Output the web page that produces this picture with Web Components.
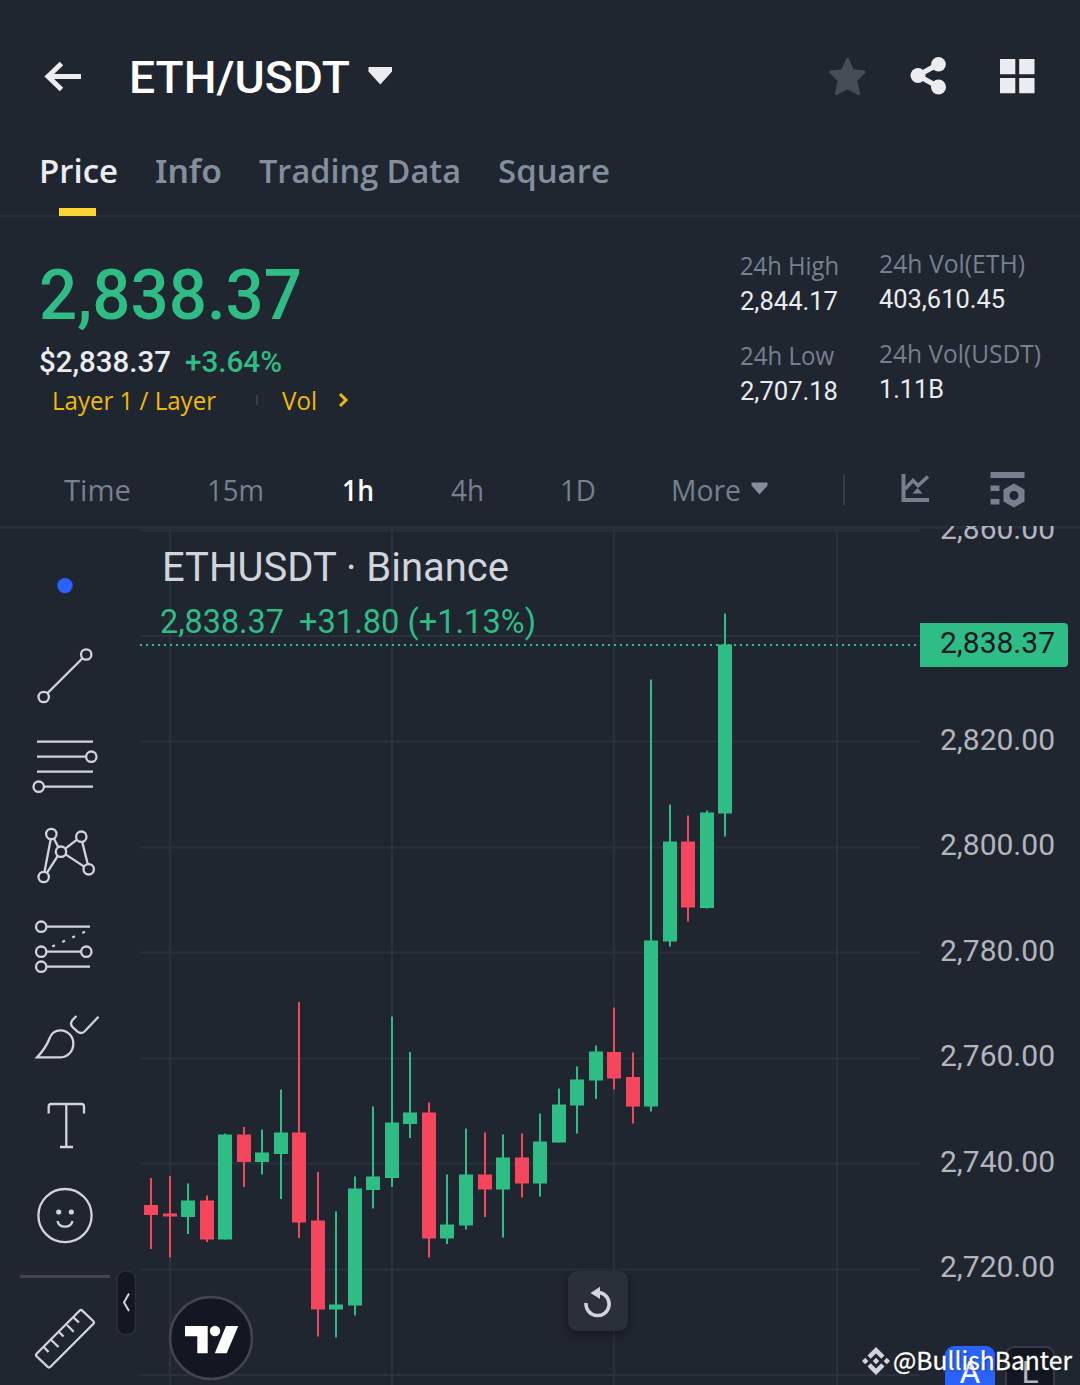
<!DOCTYPE html>
<html lang="en">
<head>
<meta charset="utf-8">
<title>ETH/USDT</title>
<style>
  html, body {
    margin: 0;
    background: #202630;
  }
  body {
    width: 1080px;
    height: 1385px;
    overflow: hidden;
    font-family: "Open Sans", "Noto Sans", sans-serif;
    color: #eaecef;
  }
</style>
</head>
<body>
<market-app></market-app>

<script>
// Single line of text, scaled horizontally to the width given in "w"
class FitText extends HTMLElement {
  connectedCallback() {
    this.attachShadow({ mode: 'open' });
    this.shadowRoot.innerHTML = `
      <style>
        :host {
          display: block;
          flex: none;
          white-space: nowrap;
        }
        span {
          display: inline-block;
          vertical-align: top;
          transform-origin: 0 50%;
        }
      </style>
      <span><slot></slot></span>
    `;
    const span = this.shadowRoot.querySelector('span');
    const width = Number(this.getAttribute('w'));
    const natural = span.getBoundingClientRect().width;
    this.style.width = width + 'px';
    if (natural) span.style.transform = `scaleX(${width / natural})`;
  }
}

class MarketHeader extends HTMLElement {
  connectedCallback() {
    this.attachShadow({ mode: 'open' });
    this.shadowRoot.innerHTML = `
      <style>
        :host {
          display: flex;
          align-items: center;
          height: 154px;
          padding: 0 45px 0 43px;
        }
        svg { display: block; flex: none; }
        .title {
          margin: 2px 18px 0 46px;
          font: 500 44px/60px Roboto, sans-serif;
          color: #fff;
        }
        .actions {
          display: flex;
          align-items: center;
          gap: 44px;
          margin-left: auto;
        }
      </style>
      <svg width="40" height="32" viewBox="0 0 40 32" fill="none" stroke="#eaecef" stroke-width="5">
        <path d="M18.5 2.5 5 15.500 18.500 28.500M5 15.500H38"/>
      </svg>
      <fit-text class="title" w="221">ETH/USDT</fit-text>
      <svg width="24" height="22" viewBox="0 0 24 22" fill="#eaecef"><path d="M.5 1H24V5.500L12.300 18.500.5 5.500Z"/></svg>
      <div class="actions">
        <svg width="38" height="40" viewBox="0 0 38 40" fill="#474d57" stroke="#474d57" stroke-width="3" stroke-linejoin="round">
          <path d="M19.500 2.500 24.500 13.700 36 15 27.700 23.300 30.500 36.500 19.500 30.700 8.500 36.500 11.300 23.300 2.500 15 14.500 13.700Z"/>
        </svg>
        <svg width="37" height="40" viewBox="0 0 37 40" fill="#eaecef">
          <path d="M8 18.500 28.500 7M8 18.500 28.500 30" stroke="#eaecef" stroke-width="5"/>
          <circle cx="8" cy="18.500" r="7.500"/><circle cx="28.500" cy="7.300" r="7.300"/><circle cx="28.500" cy="30" r="7.500"/>
        </svg>
        <svg width="35" height="36" viewBox="0 0 35 36" fill="#eaecef" style="margin-left:9px">
          <path d="M0 0h15.300v15.300H0zM19.200 0h15.300v15.300H19.200zM0 19h15.300v15.300H0zM19.200 19h15.300v15.300H19.200z"/>
        </svg>
      </div>
    `;
  }
}

class MarketTabs extends HTMLElement {
  connectedCallback() {
    this.attachShadow({ mode: 'open' });
    this.shadowRoot.innerHTML = `
      <style>
        :host {
          display: flex;
          gap: 37px;
          height: 61px;
          padding-left: 39px;
          border-bottom: 2px solid #2a3038;
          font: 600 33px/32px "Open Sans", sans-serif;
          color: #848e9c;
        }
        .tab {
          display: flex;
          flex-direction: column;
          align-items: center;
          justify-content: space-between;
          padding-top: 1px;
        }
        .info { font-family: "Noto Sans", sans-serif; }
        .active { color: #eaecef; }
        .active::after {
          content: "";
          width: 37px;
          height: 8px;
          margin: 0 2px -1px 0;
          background: #fcd535;
        }
      </style>
      <div class="tab active"><fit-text w="79">Price</fit-text></div>
      <div class="tab info"><fit-text w="67">Info</fit-text></div>
      <div class="tab"><fit-text w="202">Trading Data</fit-text></div>
      <div class="tab"><fit-text w="112">Square</fit-text></div>
    `;
  }
}

class StatItem extends HTMLElement {
  connectedCallback() {
    this.attachShadow({ mode: 'open' });
    this.shadowRoot.innerHTML = `
      <style>
        :host {
          display: flex;
          flex-direction: column;
          height: 90px;
        }
        .label {
          font: 400 26px/36px "Open Sans", sans-serif;
          color: #76808f;
        }
        .value {
          font: 400 26px/36px Roboto, sans-serif;
          color: #eaecef;
        }
      </style>
      <fit-text class="label" w="${this.getAttribute('label-w')}">${this.getAttribute('label')}</fit-text>
      <fit-text class="value" w="${this.getAttribute('value-w')}">${this.getAttribute('value')}</fit-text>
    `;
  }
}

class PriceSummary extends HTMLElement {
  connectedCallback() {
    this.attachShadow({ mode: 'open' });
    this.shadowRoot.innerHTML = `
      <style>
        :host {
          display: flex;
          height: 235px;
        }
        .left {
          width: 740px;
          padding: 38px 0 0 39px;
          box-sizing: border-box;
        }
        .last {
          font: 500 70px/80px Roboto, sans-serif;
          color: #2ebd85;
        }
        .fiat {
          display: flex;
          gap: 14px;
          margin-top: 12px;
          font: 500 29px/30px Roboto, sans-serif;
        }
        .change { color: #2ebd85; }
        .tags {
          display: flex;
          align-items: center;
          margin-top: 6px;
          padding-left: 13px;
          font: 400 25px/34px "Open Sans", sans-serif;
          color: #f0b90b;
        }
        .sep {
          width: 2px;
          height: 10px;
          margin: 0 24px 0 40px;
          background: #363c46;
        }
        .tags svg { margin-left: 21px; }
        .stats {
          display: flex;
          padding-top: 30px;
        }
        .col { width: 139px; }
        .col + .col { margin-top: -2px; }
      </style>
      <div class="left">
        <fit-text class="last" w="263">2,838.37</fit-text>
        <div class="fiat">
          <fit-text w="132">$2,838.37</fit-text>
          <fit-text class="change" w="97">+3.64%</fit-text>
        </div>
        <div class="tags">
          <fit-text w="164">Layer 1 / Layer</fit-text>
          <i class="sep"></i>
          <fit-text w="35">Vol</fit-text>
          <svg width="12" height="16" viewBox="0 0 12 16" fill="none" stroke="#f0b90b" stroke-width="3"><path d="M2 2 8 8 2 14"/></svg>
        </div>
      </div>
      <div class="stats">
        <div class="col">
          <stat-item label="24h High" label-w="99" value="2,844.17" value-w="98"></stat-item>
          <stat-item label="24h Low" label-w="94" value="2,707.18" value-w="98"></stat-item>
        </div>
        <div class="col">
          <stat-item label="24h Vol(ETH)" label-w="146" value="403,610.45" value-w="126"></stat-item>
          <stat-item label="24h Vol(USDT)" label-w="162" value="1.11B" value-w="65"></stat-item>
        </div>
      </div>
    `;
  }
}

class IntervalBar extends HTMLElement {
  connectedCallback() {
    this.attachShadow({ mode: 'open' });
    this.shadowRoot.innerHTML = `
      <style>
        :host {
          display: flex;
          align-items: center;
          box-sizing: border-box;
          height: 74px;
          padding: 2px 0 0 64px;
          font: 400 28.5px/40px "Open Sans", sans-serif;
          color: #76808f;
        }
        .items {
          display: flex;
          align-items: center;
          gap: 76px;
        }
        .active { color: #fff; font-weight: 600; }
        .caret { margin: -4px 75px 0 10px; }
        .sep {
          width: 2px;
          height: 30px;
          background: #363c46;
        }
        svg { display: block; }
      </style>
      <div class="items">
        <fit-text w="67">Time</fit-text>
        <fit-text w="57" style="margin-right:2px">15m</fit-text>
        <fit-text class="active" w="32" style="margin-right:1px">1h</fit-text>
        <fit-text w="33">4h</fit-text>
        <fit-text w="36">1D</fit-text>
        <fit-text w="70" style="margin-left:-1px">More</fit-text>
      </div>
      <svg class="caret" width="17" height="13" viewBox="0 0 17 13" fill="#848e9c"><path d="M.5.5H16.500V3.500L8.500 12.500.5 3.500Z"/></svg>
      <i class="sep"></i>
      <svg width="30" height="30" viewBox="0 0 30 30" style="margin:0 0 2px 56px" fill="none" stroke="#76808f" stroke-width="4">
        <path d="M2.500 0V28M1 26H28"/>
        <path d="M4 15 12 6.500 17 11.500 27 2.500" stroke-width="3.500"/>
        <path d="M11.500 19.500 16.500 14 21.500 19.500Z" fill="#76808f" stroke="none"/>
      </svg>
      <svg width="36" height="38" viewBox="0 0 36 38" style="margin-left:59px" fill="#76808f">
        <path d="M.5 1H34.500V7H.5zM.5 14.500H9.500V20H.5zM.5 28H9.500V33.500H.5z"/>
        <path fill-rule="evenodd" d="M24 12.500 34.500 18.500V30.500L24 36.500 13.500 30.500V18.500ZM24 20a4.500 4.500 0 1 0 0 9a4.500 4.500 0 1 0 0-9Z"/>
      </svg>
    `;
  }
}

class DrawingToolbar extends HTMLElement {
  connectedCallback() {
    this.attachShadow({ mode: 'open' });
    this.shadowRoot.innerHTML = `
      <style>
        :host {
          display: flex;
          flex-direction: column;
          flex: none;
          width: 140px;
          padding-top: 14px;
        }
        svg {
          display: block;
          flex: none;
          width: 140px;
          height: 90px;
          fill: none;
          stroke: #d1d4dc;
          stroke-width: 2.3;
        }
        hr {
          flex: none;
          width: 90px;
          height: 3px;
          margin: 15px 0 15px 20px;
          border: 0;
          background: #434651;
        }
      </style>
      <svg viewBox="0 0 140 90"><circle cx="65" cy="45.600" r="7.700" fill="#2962ff" stroke="none"/></svg>
      <svg viewBox="0 0 140 90">
        <circle cx="86.200" cy="24.500" r="5.200"/><circle cx="43.700" cy="67" r="5.200"/>
        <path d="M47.400 63.300 82.500 28.200"/>
      </svg>
      <svg viewBox="0 0 140 90">
        <path d="M37 21.700H93M37 36.700H86M37 51.700H93M44 66.700H93"/>
        <circle cx="91.300" cy="36.700" r="5.200"/><circle cx="38.700" cy="66.700" r="5.200"/>
      </svg>
      <svg viewBox="0 0 140 90">
        <path d="M53.900 28.500 58.300 37.200M50.700 29.200 44.500 61.800M57.800 45.900 46.900 62.900M65.300 38.700 77 29.700M65.500 44.400 84.200 56.600M82.200 31.900 87.800 54.200"/>
        <circle cx="51.300" cy="24" r="5.200"/><circle cx="81.300" cy="26.700" r="5.200"/><circle cx="61" cy="41.700" r="5.200"/>
        <circle cx="43.700" cy="67" r="5.200"/><circle cx="88.700" cy="59.300" r="5.200"/>
      </svg>
      <svg viewBox="0 0 140 90">
        <circle cx="41.200" cy="26.700" r="5.200"/><circle cx="41.200" cy="51.700" r="5.200"/><circle cx="41.200" cy="66.700" r="5.200"/><circle cx="86.300" cy="51.700" r="5.200"/>
        <path d="M46.500 26.700H90M46.500 51.700H81M46.500 66.700H90"/>
        <path d="M52.200 46.500 86 31.300" stroke-dasharray="3 8"/>
      </svg>
      <svg viewBox="0 0 140 90">
        <path d="M37 67.400C44 60 47 55 49.500 48.500C51.500 43 55.500 40.400 60.500 40.400A13 13 0 0 1 73.300 53.500C73.300 61.500 67.500 67.400 59.500 67.400Z"/>
        <path d="M76.500 26 72.500 30Q69.500 33.500 72.500 37L77.500 41.700Q81 44.500 84.500 41.500L98.500 26.800"/>
      </svg>
      <svg viewBox="0 0 140 90"><path d="M48.700 33.500V26.500Q48.700 24 51.200 24H81.500Q84 24 84 26.500V33.500M66.300 24V67M60 67H73"/></svg>
      <svg viewBox="0 0 140 90">
        <circle cx="65" cy="45.600" r="26.600"/>
        <circle cx="58.700" cy="42" r="2.600" fill="#d1d4dc" stroke="none"/><circle cx="71.300" cy="42" r="2.600" fill="#d1d4dc" stroke="none"/>
        <path d="M57.500 51C59 58.500 71 58.500 72.500 51"/>
      </svg>
      <hr>
      <svg viewBox="0 0 140 90" stroke-linejoin="round">
        <path d="M36.800 60.500 79.500 17.800Q81 16.300 82.500 17.800L93.200 28Q94.700 29.500 93.200 31L50.500 73.700Q49 75.200 47.500 73.700L36.800 63.500Q35.300 62 36.800 60.500Z"/>
        <path d="M44 54.300 48.500 59M51.300 47 58.500 54M59.300 39.300 63.500 43.500M67 32 73.700 38.700M73.700 24.700 79 29.500"/>
      </svg>
    `;
  }
}

const GREEN = '#2ebd85';
const RED = '#f6465d';

// x centre, direction, high, body top, body bottom, low (plot pixels)
const CANDLES = [
  [151, 'd', 1178, 1205, 1215, 1249],
  [170, 'd', 1176, 1213.5, 1216.5, 1257.5],
  [188, 'u', 1183.5, 1200.5, 1217, 1234],
  [207, 'd', 1195.5, 1200.5, 1239.5, 1242],
  [225, 'u', 1133.5, 1134.5, 1239.5, 1239.5],
  [244, 'd', 1127, 1134.5, 1162, 1187],
  [262, 'u', 1129.5, 1152.5, 1162, 1174.5],
  [281, 'u', 1089.5, 1132.5, 1154, 1199],
  [299, 'd', 1002, 1132.5, 1222.5, 1238],
  [318, 'd', 1172, 1220.5, 1309.5, 1336.5],
  [336, 'u', 1211.5, 1304.5, 1309.5, 1337.5],
  [355, 'u', 1176.5, 1188.5, 1305.5, 1315.5],
  [373, 'u', 1106.5, 1176.5, 1190, 1208.5],
  [392, 'u', 1016.5, 1122.5, 1178, 1187],
  [410, 'u', 1052, 1112.5, 1124, 1138],
  [429, 'd', 1102.5, 1112.5, 1238.5, 1257.5],
  [447, 'u', 1174.5, 1224.5, 1238.5, 1244],
  [466, 'u', 1128.5, 1174.5, 1225.5, 1229.5],
  [485, 'd', 1132.5, 1174.5, 1189.5, 1217],
  [503, 'u', 1134.5, 1157.5, 1189.5, 1237.5],
  [522, 'd', 1133.5, 1157.5, 1183.5, 1197.5],
  [540, 'u', 1113.5, 1141.5, 1183.5, 1196.5],
  [559, 'u', 1088.5, 1104.5, 1142.5, 1142.5],
  [577, 'u', 1066.5, 1079.5, 1105.5, 1133.5],
  [596, 'u', 1045.5, 1051.5, 1080.5, 1099],
  [614, 'd', 1007.5, 1052, 1078.5, 1089.5],
  [633, 'd', 1052.5, 1077, 1106.5, 1123.5],
  [651, 'u', 679.5, 940.5, 1106.5, 1111.5],
  [670, 'u', 804.5, 841.5, 941.5, 946.5],
  [688, 'd', 815.5, 841.5, 907.5, 921.5],
  [707, 'u', 810.5, 812.5, 908, 908.5],
  [725, 'u', 613.5, 644.5, 813.5, 836.5]
];

class CandlePlot extends HTMLElement {
  connectedCallback() {
    const rows = [530.5, 636, 741.5, 847.5, 952.5, 1058.5, 1163.5, 1269.5, 1375];
    const cols = [170, 392, 614, 837];
    const grid = rows.map(y => `M140 ${y}H920`).join('') + cols.map(x => `M${x} 526V1385`).join('');
    const candles = CANDLES.map(([x, dir, high, top, bottom, low]) => `
      <g fill="${dir === 'u' ? GREEN : RED}">
        <rect x="${x - 1}" y="${high}" width="2" height="${low - high}"/>
        <rect x="${x - 7}" y="${top}" width="14" height="${bottom - top}"/>
      </g>`).join('');
    this.attachShadow({ mode: 'open' });
    this.shadowRoot.innerHTML = `
      <style>
        :host {
          display: block;
          position: relative;
          flex: none;
          width: 780px;
          height: 859px;
        }
        svg { display: block; }
        .legend {
          position: absolute;
          left: 20px;
          top: 17px;
          font-family: Roboto, sans-serif;
        }
        .symbol {
          margin-left: 2px;
          font-size: 40px;
          line-height: 50px;
          color: #d1d4dc;
        }
        .quote {
          display: flex;
          gap: 15px;
          margin-top: 9px;
          font-size: 33px;
          line-height: 40px;
          color: #2ebd85;
        }
      </style>
      <svg width="780" height="859" viewBox="140 526 780 859">
        <path d="${grid}" stroke="#2b313b" stroke-width="2" fill="none"/>
        <path d="M140 645H920" stroke="${GREEN}" stroke-width="2" stroke-dasharray="2 4"/>
        ${candles}
      </svg>
      <div class="legend">
        <fit-text class="symbol" w="347">ETHUSDT · Binance</fit-text>
        <div class="quote">
          <fit-text w="124">2,838.37</fit-text>
          <fit-text w="237">+31.80 (+1.13%)</fit-text>
        </div>
      </div>
    `;
  }
}

class PriceAxis extends HTMLElement {
  connectedCallback() {
    const labels = ['2,860.00', '', '2,820.00', '2,800.00', '2,780.00', '2,760.00', '2,740.00', '2,720.00'];
    this.attachShadow({ mode: 'open' });
    this.shadowRoot.innerHTML = `
      <style>
        :host {
          display: block;
          position: relative;
          flex: none;
          width: 160px;
          font: 400 29.5px/40px Roboto, sans-serif;
          color: #b2b5be;
        }
        .scale { margin-top: -50px; }
        .row {
          display: flex;
          align-items: center;
          height: 105.5px;
          padding-left: 20px;
        }
        .tag {
          position: absolute;
          left: 0;
          top: 96.5px;
          width: 148px;
          height: 44px;
          padding-left: 20px;
          box-sizing: border-box;
          border-radius: 0 4px 4px 0;
          background: #2ebd85;
          color: #131722;
        }
      </style>
      <div class="scale">
        ${labels.map(l => `<div class="row">${l && `<fit-text w="115">${l}</fit-text>`}</div>`).join('')}
      </div>
      <div class="tag"><fit-text w="115">2,838.37</fit-text></div>
    `;
  }
}

class ChartPanel extends HTMLElement {
  connectedCallback() {
    this.attachShadow({ mode: 'open' });
    this.shadowRoot.innerHTML = `
      <style>
        :host {
          display: flex;
          position: relative;
          height: 859px;
          overflow: hidden;
        }
        :host::before {
          content: "";
          position: absolute;
          inset: 0 0 auto 0;
          height: 3px;
          background: rgba(60, 66, 76, 0.35);
        }
        .over { position: absolute; }
        svg { display: block; }
        .collapse { left: 116px; top: 744px; }
        .logo { left: 168px; top: 769px; }
        .reset {
          left: 568px;
          top: 744.5px;
          width: 60px;
          height: 60px;
          border-radius: 9px;
          background: #2a303a;
          box-shadow: 0 4px 8px rgba(10, 13, 20, 0.55);
        }
        .mode {
          top: 820px;
          width: 50px;
          height: 60px;
          box-sizing: border-box;
          border-radius: 9px;
          font: 400 32px/52px Roboto, sans-serif;
          text-align: center;
        }
        .auto { left: 945px; background: #2962ff; color: #fff; }
        .log { left: 1005px; background: #131722; border: 2px solid #373b46; color: #b2b5be; line-height: 48px; }
        .mark {
          left: 862px;
          top: 817px;
          display: flex;
          align-items: center;
          gap: 3px;
          height: 36px;
          font: 400 24.5px/36px "Noto Sans CJK SC", sans-serif;
          color: #fff;
          text-shadow: 1px 1px 2px rgba(0, 0, 0, 0.5);
        }
        .mark fit-text { margin-top: -2px; -webkit-text-stroke: 0.3px #fff; }
      </style>
      <drawing-toolbar></drawing-toolbar>
      <candle-plot></candle-plot>
      <price-axis></price-axis>

      <svg class="over collapse" width="21" height="66" viewBox="0 0 21 66" fill="none">
        <rect x="1" y="1" width="18.500" height="63.500" rx="8" fill="#131722" stroke="#2a2f39" stroke-width="1.500"/>
        <path d="M13 23.500 8 32.500 13 41" stroke="#d1d4dc" stroke-width="2"/>
      </svg>
      <svg class="over logo" width="86" height="86" viewBox="0 0 86 86" fill="#fff">
        <circle cx="43" cy="43" r="41" fill="#131722" stroke="#434651" stroke-width="2.500"/>
        <path d="M17 31H39.700V58.300H29.300V41.300H17Z"/>
        <circle cx="47" cy="36" r="5.200"/>
        <path d="M58 31H70.300L58.700 58.300H46.800Z"/>
      </svg>
      <div class="over reset">
        <svg width="60" height="60" viewBox="568 1270.500 60 60" fill="none">
          <path d="M586 1302.500A11.600 11.600 0 1 0 599 1292" stroke="#d1d4dc" stroke-width="3.500"/>
          <path d="M590.500 1292.500 600 1286.200V1298.500Z" fill="#d1d4dc"/>
        </svg>
      </div>
      <div class="over mode auto">A</div>
      <div class="over mode log">L</div>
      <div class="over mark">
        <svg width="28" height="28" viewBox="0 0 28 28" fill="#d1d4dc">
          <path d="M14 0 22.500 8.500 19.300 11.700 14 6.400 8.700 11.700 5.500 8.500ZM14 28 5.500 19.500 8.700 16.300 14 21.600 19.300 16.300 22.500 19.500ZM14 10.800 17.200 14 14 17.200 10.800 14ZM3.200 10.800 6.400 14 3.200 17.200 0 14ZM24.800 10.800 28 14 24.800 17.200 21.600 14Z"/>
        </svg>
        <fit-text w="179">@BullishBanter</fit-text>
      </div>
    `;
  }
}

class MarketApp extends HTMLElement {
  connectedCallback() {
    this.attachShadow({ mode: 'open' });
    this.shadowRoot.innerHTML = `
      <style>
        :host {
          display: flex;
          flex-direction: column;
          width: 1080px;
          height: 1385px;
        }
      </style>
      <market-header></market-header>
      <market-tabs></market-tabs>
      <price-summary></price-summary>
      <interval-bar></interval-bar>
      <chart-panel></chart-panel>
    `;
  }
}

customElements.define('market-app', MarketApp);
customElements.define('market-header', MarketHeader);
customElements.define('market-tabs', MarketTabs);
customElements.define('price-summary', PriceSummary);
customElements.define('stat-item', StatItem);
customElements.define('interval-bar', IntervalBar);
customElements.define('chart-panel', ChartPanel);
customElements.define('drawing-toolbar', DrawingToolbar);
customElements.define('candle-plot', CandlePlot);
customElements.define('price-axis', PriceAxis);
// last, so every label is in its final styles when it is measured
customElements.define('fit-text', FitText);
</script>
</body>
</html>
